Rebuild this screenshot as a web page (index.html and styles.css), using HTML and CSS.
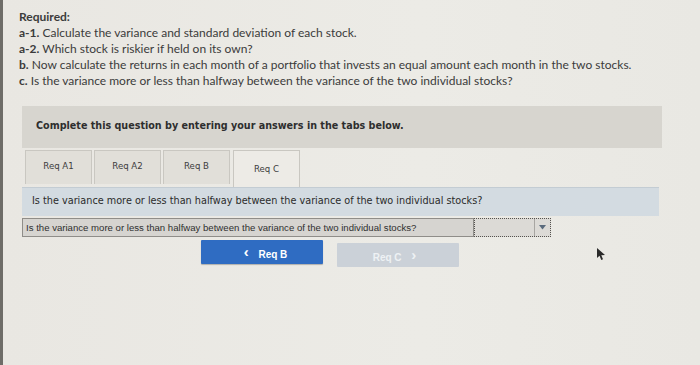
FILE: index.html
```html
<!DOCTYPE html>
<html lang="en">
<head>
    <meta charset="UTF-8">
    <meta name="viewport" content="width=device-width, initial-scale=1.0">
    <title>Required</title>
    <link rel="stylesheet" href="styles.css">
</head>
<body>
    <div class="page">
        <div class="required">
            <p class="required-title">Required:</p>
            <p><b>a-1.</b> Calculate the variance and standard deviation of each stock.</p>
            <p><b>a-2.</b> Which stock is riskier if held on its own?</p>
            <p><b>b.</b> Now calculate the returns in each month of a portfolio that invests an equal amount each month in the two stocks.</p>
            <p><b>c.</b> Is the variance more or less than halfway between the variance of the two individual stocks?</p>
        </div>

        <div class="instructions">
            Complete this question by entering your answers in the tabs below.
        </div>

        <div class="tabs">
            <div class="tab">Req A1</div>
            <div class="tab">Req A2</div>
            <div class="tab">Req B</div>
            <div class="tab active">Req C</div>
        </div>

        <div class="panel">
            Is the variance more or less than halfway between the variance of the two individual stocks?
        </div>

        <div class="answer-row">
            <div class="answer-text">Is the variance more or less than halfway between the variance of the two individual stocks?</div>
            <div class="answer-select">
                <span class="select-arrow">
                    <svg width="7" height="5" viewBox="0 0 7 5"><polygon points="0,0 7,0 3.5,4.5" fill="#5a6a7c"/></svg>
                </span>
            </div>
        </div>

        <div class="nav">
            <button class="nav-btn prev"><span class="chev">&lsaquo;</span> Req B</button>
            <button class="nav-btn next">Req C <span class="chev">&rsaquo;</span></button>
        </div>

        <!-- mouse pointer from the photo -->
        <svg class="cursor" width="9" height="13" viewBox="0 0 9 13">
            <polygon points="0,0 0,10 2.5,7.8 4.3,12 6,11.2 4.3,7.2 8,7" fill="#2a2a2a"/>
        </svg>
    </div>
</body>
</html>
```

FILE: styles.css
```css
body {
    margin: 0;
    padding: 0;
    background-color: #eae8e3;
}

.page {
    position: relative;
    width: 697px;
    height: 365px;
    border-left: 3px solid #6e6c68;
    background: linear-gradient(90deg, #e9e7e2 0%, #ecebe6 60%, #e9e8e3 100%);
}

.required {
    padding: 9px 0 0 16px;
    font-family: Lato, "Open Sans", sans-serif;
    font-size: 12px;
    color: #3b3b3b;
}

.required p {
    margin: 0;
    line-height: 16px;
}

.required b,
.required-title {
    font-weight: bold;
}

.instructions {
    margin: 17px 0 0 19px;
    width: 626px;
    height: 38px;
    padding: 0 0 4px 14px;
    background-color: #d7d5cf;
    font-family: "DejaVu Sans", Verdana, sans-serif;
    font-weight: bold;
    font-size: 9.6px;
    color: #2e2e2e;
    display: flex;
    align-items: center;
}

.tabs {
    display: flex;
    gap: 2px;
    margin: 2px 0 0 22px;
    height: 36px;
}

.tab {
    width: 67px;
    height: 34px;
    background-color: #e1dfd9;
    border: 1px solid #c9c7c1;
    border-bottom: none;
    font-family: "DejaVu Sans", Verdana, sans-serif;
    font-size: 8.6px;
    color: #3d3d3d;
    display: flex;
    align-items: center;
    justify-content: center;
    padding-bottom: 4px;
    box-sizing: border-box;
}

.tab.active {
    background-color: #edebe6;
    height: 37px;
    padding-bottom: 0;
    margin-left: 1px;
}

.panel {
    margin: 1px 0 0 19px;
    width: 637px;
    height: 29px;
    padding-left: 10px;
    background-color: #d3dbe1;
    border-top: 1px solid #c3ccd3;
    font-family: "DejaVu Sans", Verdana, sans-serif;
    font-size: 9.7px;
    color: #2b2b2b;
    display: flex;
    align-items: center;
    padding-bottom: 3px;
    box-sizing: border-box;
}

.answer-row {
    display: flex;
    margin: 2px 0 0 19px;
    height: 19px;
}

.answer-text {
    width: 452px;
    background-color: #d6d4d0;
    border: 1px solid #8f8d89;
    box-sizing: border-box;
    padding-left: 3px;
    font-family: "Liberation Sans", Arial, sans-serif;
    font-size: 9.6px;
    color: #2f2f2f;
    display: flex;
    align-items: center;
    white-space: nowrap;
    overflow: hidden;
}

.answer-select {
    width: 77px;
    border: 1.5px dotted #55534f;
    background-color: #dcdad6;
    box-sizing: border-box;
    display: flex;
    justify-content: flex-end;
}

.select-arrow {
    width: 15px;
    border-left: 1px solid #a8a6a2;
    display: flex;
    align-items: center;
    justify-content: center;
}

.nav {
    display: flex;
    align-items: flex-start;
    gap: 14px;
    margin: 3px 0 0 198px;
}

.nav-btn {
    width: 122px;
    height: 24px;
    border: none;
    border-radius: 1px;
    font-family: "Liberation Sans", Arial, sans-serif;
    font-weight: bold;
    font-size: 10px;
    padding: 0;
}

.nav-btn.prev {
    background-color: #2f6cc2;
    color: #ffffff;
    box-shadow: 0 1px 1px rgba(0, 0, 0, 0.25);
}

.nav-btn.next {
    margin-top: 3px;
    background-color: #cbd1d8;
    color: #eef1f4;
}

.chev {
    font-size: 15px;
    margin: 0 7px;
    position: relative;
    top: -1px;
}

.cursor {
    position: absolute;
    left: 594px;
    top: 248px;
}
```
